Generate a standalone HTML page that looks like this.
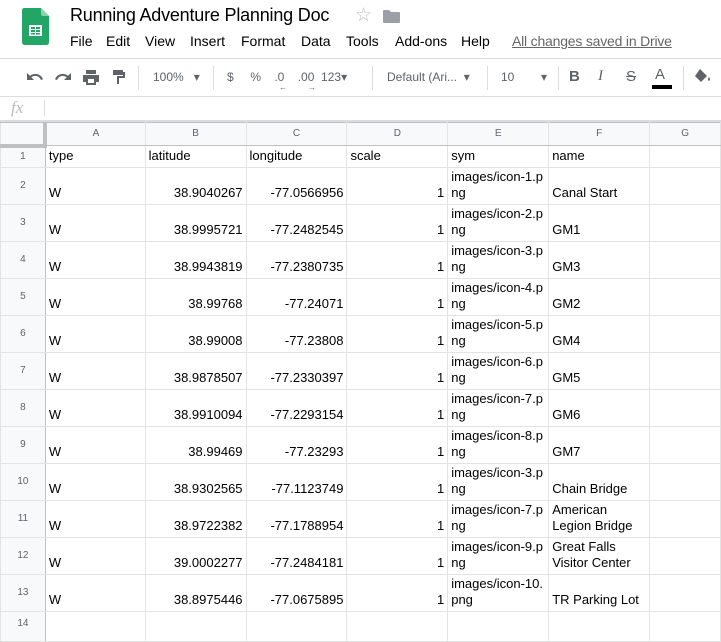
<!DOCTYPE html>
<html><head><meta charset="utf-8"><style>
*{margin:0;padding:0;box-sizing:border-box}
body{width:721px;height:628px;overflow:hidden;background:#fff;font-family:"Liberation Sans",Arial,sans-serif;position:relative;color:#202124}
.a{position:absolute;white-space:nowrap}
.m{position:absolute;top:33px;font-size:14px;color:#000}
table{position:absolute;left:0;top:122px;border-collapse:collapse;table-layout:fixed;font-size:13px;color:#000}
td{border:1px solid #e2e3e3;padding:0 3px 3px 3px;vertical-align:bottom;line-height:16px;overflow:hidden;white-space:nowrap}
td.r{text-align:right}
tr.h td{background:#f8f9fa;color:#5f6368;font-size:10px;text-align:center;vertical-align:middle;padding:0;border-color:#c0c0c0 #e2e3e3}
td.n{background:#f8f9fa;color:#5f6368;font-size:10px;text-align:center;vertical-align:middle;padding:0;border-right:1px solid #c0c0c0}
.tb{color:#5f6368;font-size:12px}
.sep{position:absolute;top:66px;width:1px;height:24px;background:#dadce0}
</style></head><body>
<svg class="a" style="left:22px;top:8px" width="27" height="37" viewBox="0 0 27 37">
<path d="M2 0H19L27 8V34Q27 37 24 37H3Q0 37 0 34V3Q0 0 2 0Z" fill="#23a566"/>
<path d="M19 0L27 8H21Q19 8 19 6Z" fill="#8ed1b1"/>
<rect x="7" y="17" width="13" height="11" fill="#fff"/>
<rect x="9" y="19" width="4" height="2" fill="#23a566"/><rect x="14" y="19" width="4" height="2" fill="#23a566"/>
<rect x="9" y="22" width="4" height="2" fill="#23a566"/><rect x="14" y="22" width="4" height="2" fill="#23a566"/>
<rect x="9" y="25" width="4" height="1.5" fill="#23a566"/><rect x="14" y="25" width="4" height="1.5" fill="#23a566"/>
</svg>
<div class="a" style="left:70px;top:5px;font-size:18px;color:#000;letter-spacing:-0.2px">Running Adventure Planning Doc</div>
<div class="a" style="left:355px;top:4px;font-size:19px;color:#bbb">☆</div>
<svg class="a" style="left:383px;top:10px" width="17" height="13"><path d="M0 1Q0 0 1 0H6L8 2H16Q17 2 17 3V12Q17 13 16 13H1Q0 13 0 12Z" fill="#9aa0a6"/></svg>
<div class="m" style="left:70px">File</div>
<div class="m" style="left:106px">Edit</div>
<div class="m" style="left:145px">View</div>
<div class="m" style="left:190px">Insert</div>
<div class="m" style="left:241px">Format</div>
<div class="m" style="left:301px">Data</div>
<div class="m" style="left:346px">Tools</div>
<div class="m" style="left:395px">Add-ons</div>
<div class="m" style="left:461px">Help</div>
<div class="a" style="left:512px;top:33px;font-size:14px;color:#666;text-decoration:underline;letter-spacing:-0.2px">All changes saved in Drive</div>
<div class="a" style="left:0;top:58px;width:721px;height:1px;background:#dadce0"></div>
<svg class="a" style="left:26px;top:70px" width="18" height="14" fill="#5f6368"><path d="M1 3V10H8L5.3 7.3Q7.5 5.5 10.5 6 13.5 6.8 15 10L17 9.3Q15.3 5 11 4 7 3.4 4 5.8Z"/></svg>
<svg class="a" style="left:54px;top:70px" width="18" height="14" fill="#5f6368"><path transform="translate(18 0) scale(-1 1)" d="M1 3V10H8L5.3 7.3Q7.5 5.5 10.5 6 13.5 6.8 15 10L17 9.3Q15.3 5 11 4 7 3.4 4 5.8Z"/></svg>
<svg class="a" style="left:82px;top:69px" width="18" height="16" fill="#5f6368"><path d="M4 1h10v4h-10z M1 6h16v7h-3v3h-10v-3h-3z"/><rect x="6" y="10" width="6" height="4" fill="#fff"/></svg>
<svg class="a" style="left:112px;top:69px" width="14" height="16" fill="#5f6368"><path d="M1 1h10v5h-10z M11 3h2v6h-6v6h-2v-8h6z"/></svg>
<div class="sep" style="left:138px"></div>
<div class="a tb" style="left:153px;top:70px">100%&nbsp;&nbsp;&nbsp;▾</div>
<div class="sep" style="left:213px"></div>
<div class="a tb" style="left:227px;top:70px">$&nbsp;&nbsp;&nbsp;&nbsp;&nbsp;%&nbsp;&nbsp;&nbsp;&nbsp;.0&nbsp;&nbsp;&nbsp;&nbsp;.00&nbsp;&nbsp;123▾</div>
<div class="a" style="left:279px;top:83px;font-size:8px;color:#5f6368">←</div>
<div class="a" style="left:308px;top:83px;font-size:8px;color:#5f6368">→</div>
<div class="sep" style="left:372px"></div>
<div class="a tb" style="left:387px;top:70px">Default (Ari...&nbsp;&nbsp;▾</div>
<div class="sep" style="left:487px"></div>
<div class="a tb" style="left:501px;top:70px">10</div>
<div class="a tb" style="left:541px;top:70px">▾</div>
<div class="sep" style="left:558px"></div>
<div class="a" style="left:569px;top:68px;font-size:15px;font-weight:bold;color:#5f6368">B</div>
<div class="a" style="left:598px;top:68px;font-size:15px;font-style:italic;font-family:'Liberation Serif',serif;color:#5f6368">I</div>
<div class="a" style="left:626px;top:68px;font-size:15px;text-decoration:line-through;color:#5f6368">S</div>
<div class="a" style="left:655px;top:66px;font-size:15px;color:#5f6368">A</div>
<div class="a" style="left:652px;top:85px;width:20px;height:4px;background:#000"></div>
<div class="sep" style="left:683px"></div>
<svg class="a" style="left:694px;top:68px" width="18" height="16" fill="#5f6368"><path d="M6 1L13 8 7 14 1 8Z"/><path d="M15 9Q17 12 15 13 13 12 15 9Z"/></svg>
<div class="a" style="left:0;top:96px;width:721px;height:1px;background:#dadce0"></div>
<div class="a" style="left:11px;top:98px;font-size:17px;font-style:italic;font-family:'Liberation Serif',serif;color:#bbb">fx</div>
<div class="a" style="left:44px;top:100px;width:1px;height:16px;background:#dadce0"></div>
<div class="a" style="left:0;top:120px;width:721px;height:2px;background:#dadce0"></div>
<table>
<colgroup><col style="width:45px"><col style="width:100px"><col style="width:101px"><col style="width:101px"><col style="width:101px"><col style="width:101px"><col style="width:101px"><col style="width:71px"></colgroup>
<tr class="h" style="height:23px"><td style="border-right:4px solid #c0c0c0;border-bottom:4px solid #c0c0c0"></td><td>A</td><td>B</td><td>C</td><td>D</td><td>E</td><td>F</td><td>G</td></tr>
<tr style="height:22px"><td class="n">1</td><td>type</td><td>latitude</td><td>longitude</td><td>scale</td><td>sym</td><td>name</td><td></td></tr>
<tr style="height:37px"><td class="n">2</td><td>W</td><td class="r">38.9040267</td><td class="r">-77.0566956</td><td class="r">1</td><td>images/icon-1.p<br>ng</td><td>Canal Start</td><td></td></tr>
<tr style="height:37px"><td class="n">3</td><td>W</td><td class="r">38.9995721</td><td class="r">-77.2482545</td><td class="r">1</td><td>images/icon-2.p<br>ng</td><td>GM1</td><td></td></tr>
<tr style="height:37px"><td class="n">4</td><td>W</td><td class="r">38.9943819</td><td class="r">-77.2380735</td><td class="r">1</td><td>images/icon-3.p<br>ng</td><td>GM3</td><td></td></tr>
<tr style="height:37px"><td class="n">5</td><td>W</td><td class="r">38.99768</td><td class="r">-77.24071</td><td class="r">1</td><td>images/icon-4.p<br>ng</td><td>GM2</td><td></td></tr>
<tr style="height:37px"><td class="n">6</td><td>W</td><td class="r">38.99008</td><td class="r">-77.23808</td><td class="r">1</td><td>images/icon-5.p<br>ng</td><td>GM4</td><td></td></tr>
<tr style="height:37px"><td class="n">7</td><td>W</td><td class="r">38.9878507</td><td class="r">-77.2330397</td><td class="r">1</td><td>images/icon-6.p<br>ng</td><td>GM5</td><td></td></tr>
<tr style="height:37px"><td class="n">8</td><td>W</td><td class="r">38.9910094</td><td class="r">-77.2293154</td><td class="r">1</td><td>images/icon-7.p<br>ng</td><td>GM6</td><td></td></tr>
<tr style="height:37px"><td class="n">9</td><td>W</td><td class="r">38.99469</td><td class="r">-77.23293</td><td class="r">1</td><td>images/icon-8.p<br>ng</td><td>GM7</td><td></td></tr>
<tr style="height:37px"><td class="n">10</td><td>W</td><td class="r">38.9302565</td><td class="r">-77.1123749</td><td class="r">1</td><td>images/icon-3.p<br>ng</td><td>Chain Bridge</td><td></td></tr>
<tr style="height:37px"><td class="n">11</td><td>W</td><td class="r">38.9722382</td><td class="r">-77.1788954</td><td class="r">1</td><td>images/icon-7.p<br>ng</td><td>American<br>Legion Bridge</td><td></td></tr>
<tr style="height:37px"><td class="n">12</td><td>W</td><td class="r">39.0002277</td><td class="r">-77.2484181</td><td class="r">1</td><td>images/icon-9.p<br>ng</td><td>Great Falls<br>Visitor Center</td><td></td></tr>
<tr style="height:37px"><td class="n">13</td><td>W</td><td class="r">38.8975446</td><td class="r">-77.0675895</td><td class="r">1</td><td>images/icon-10.<br>png</td><td>TR Parking Lot</td><td></td></tr>
<tr style="height:30px"><td class="n" style="vertical-align:top;padding-top:4px">14</td><td></td><td></td><td></td><td></td><td></td><td></td><td></td></tr>
</table>
</body></html>
